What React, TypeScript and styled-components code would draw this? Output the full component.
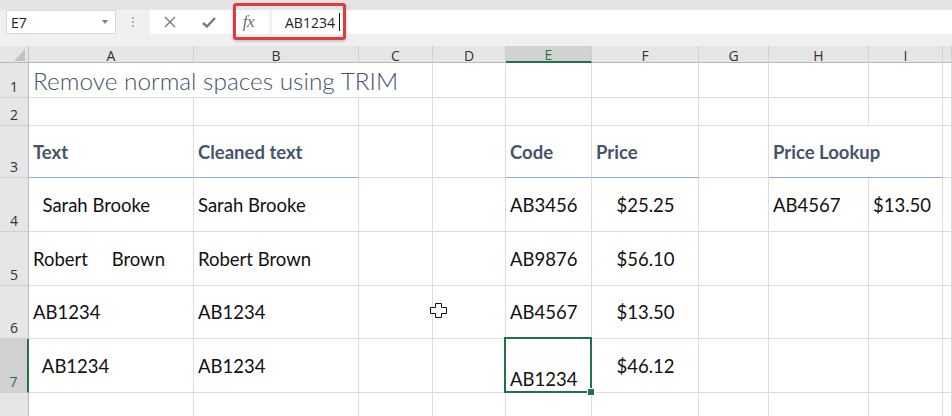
import React from 'react';
import styled, { createGlobalStyle, css } from 'styled-components';

const GlobalStyle = createGlobalStyle`
  * { box-sizing: border-box; }
  html, body { margin: 0; padding: 0; background: #fff; overflow: hidden; }
  body { font-family: Lato, "Liberation Sans", sans-serif; }
`;

const Window = styled.div`
  position: relative;
  width: 952px;
  height: 416px;
  overflow: hidden;
  background: #fff;
`;

const TopStrip = styled.div`
  height: 10px;
  background: #e4e4e4;
`;

const FormulaArea = styled.div`
  display: flex;
  align-items: stretch;
  height: 36px;
  padding-bottom: 12px;
  background: #f0f0f0;
`;

const NameBox = styled.div`
  margin-left: 6px;
  width: 110px;
  background: #fff;
  border: 1px solid #d8d8d8;
  display: flex;
  align-items: center;
  justify-content: space-between;
  padding: 0 7px 0 4px;
  font-family: "Open Sans", sans-serif;
  font-size: 14px;
  color: #222;
`;

const DropArrow = styled.span`
  width: 0;
  height: 0;
  border-left: 3.5px solid transparent;
  border-right: 3.5px solid transparent;
  border-top: 4px solid #7c7c7c;
`;

const Dots = styled.div`
  width: 34px;
  display: flex;
  flex-direction: column;
  align-items: center;
  justify-content: center;
  gap: 2px;
`;

const Dot = styled.span`
  width: 2px;
  height: 2px;
  background: #b3b3b3;
`;

const ButtonsBox = styled.div`
  width: 119px;
  background: #fff;
  display: flex;
  align-items: center;
`;

const ToolButton = styled.div<{ $w: number }>`
  width: ${(p) => p.$w}px;
  height: 100%;
  display: flex;
  align-items: center;
  justify-content: center;
  color: #7a7a7a;
`;

const FxText = styled.span`
  font-family: "Liberation Serif", serif;
  font-style: italic;
  font-size: 17px;
  color: #6e6e6e;
  letter-spacing: -0.5px;
`;

const FormulaInput = styled.div`
  flex: 1;
  margin-left: 3px;
  background: #fff;
  display: flex;
  align-items: center;
  padding-left: 13px;
  font-family: "Open Sans", sans-serif;
  font-size: 14px;
  color: #222;
`;

const Caret = styled.span`
  display: inline-block;
  width: 1px;
  height: 18px;
  background: #111;
  margin-left: 4px;
`;

const Highlight = styled.div`
  position: absolute;
  left: 233px;
  top: 3px;
  width: 113px;
  height: 37px;
  border: 3px solid #e2393f;
  border-radius: 3px;
  box-shadow: 0 1px 3px rgba(0, 0, 0, 0.25);
  pointer-events: none;
`;

const Sheet = styled.div`
  display: grid;
  grid-template-columns: 29px 165px 165px 74px 73px 86px 107px 70px 100px 74px 1fr;
  grid-template-rows: 17px 35px 28px 52px 54px 54px 53px 54px 54px;
`;

const Corner = styled.div`
  background: #e6e6e6;
  border-right: 1px solid #c4c4c4;
  border-bottom: 1px solid #b8b8b8;
  position: relative;
  &::after {
    content: '';
    position: absolute;
    right: 3px;
    bottom: 1px;
    width: 0;
    height: 0;
    border-left: 11px solid transparent;
    border-bottom: 12px solid #c2c2c2;
  }
`;

const ColHeader = styled.div<{ $active?: boolean }>`
  background: #e6e6e6;
  border-right: 1px solid #d0d0d0;
  border-bottom: 1px solid #b8b8b8;
  display: flex;
  align-items: center;
  justify-content: center;
  padding-top: 2px;
  font-family: "Open Sans", sans-serif;
  font-size: 14px;
  color: #333;
  ${(p) =>
    p.$active &&
    css`
      background: #d2d2d2;
      color: #217346;
      border-bottom: 2px solid #217346;
    `}
`;

const RowHeader = styled.div<{ $active?: boolean }>`
  background: #e6e6e6;
  border-right: 1px solid #bcbcbc;
  border-bottom: 1px solid #d0d0d0;
  display: flex;
  align-items: flex-end;
  justify-content: center;
  padding-bottom: 1px;
  font-family: "Open Sans", sans-serif;
  font-size: 14px;
  color: #333;
  ${(p) =>
    p.$active &&
    css`
      background: #d2d2d2;
      color: #217346;
      border-right: 2px solid #217346;
    `}
`;

type Variant = 'title' | 'header' | 'data';

const Cell = styled.div<{
  $variant?: Variant;
  $align?: 'left' | 'center';
  $bottom?: boolean;
  $rule?: boolean;
  $span?: number;
  $selected?: boolean;
}>`
  position: relative;
  border-right: 1px solid #dcdcdc;
  border-bottom: 1px solid ${(p) => (p.$rule ? '#8eaadb' : '#dcdcdc')};
  display: flex;
  align-items: ${(p) => (p.$bottom ? 'flex-end' : 'center')};
  justify-content: ${(p) => (p.$align === 'center' ? 'center' : 'flex-start')};
  padding: 0 3px ${(p) => (p.$bottom ? '2px' : '0')} 4px;
  white-space: pre;
  font-family: Lato, "Liberation Sans", sans-serif;
  font-size: 18.5px;
  color: #111;
  ${(p) => p.$span && css`grid-column: span ${p.$span};`}
  ${(p) =>
    p.$variant === 'title' &&
    css`
      font-size: 24.4px;
      font-weight: 300;
      color: #44546a;
    `}
  ${(p) =>
    p.$variant === 'header' &&
    css`
      font-weight: 700;
      color: #44546a;
    `}
  ${(p) =>
    p.$selected &&
    css`
      &::after {
        content: '';
        position: absolute;
        left: -2px;
        top: -2px;
        right: -1px;
        bottom: -1px;
        border: 2px solid #217346;
        pointer-events: none;
      }
      &::before {
        content: '';
        position: absolute;
        right: -4px;
        bottom: -4px;
        width: 6px;
        height: 6px;
        background: #217346;
        border: 1px solid #fff;
        z-index: 2;
      }
    `}
`;

const Pointer = styled.svg`
  position: absolute;
  left: 430px;
  top: 303px;
  pointer-events: none;
`;

type CellDef = {
  text?: string;
  variant?: Variant;
  align?: 'left' | 'center';
  bottom?: boolean;
  rule?: boolean;
  span?: number;
  selected?: boolean;
};

const COLS = ['A', 'B', 'C', 'D', 'E', 'F', 'G', 'H', 'I', ''];

const e = (): CellDef => ({});
const blanks = (n: number): CellDef[] => Array.from({ length: n }, e);

const ROWS: CellDef[][] = [
  [{ text: 'Remove normal spaces using TRIM', variant: 'title', span: 3 }, ...blanks(7)],
  blanks(10),
  [
    { text: 'Text', variant: 'header', rule: true },
    { text: 'Cleaned text', variant: 'header', rule: true },
    e(),
    e(),
    { text: 'Code', variant: 'header', rule: true },
    { text: 'Price', variant: 'header', rule: true },
    e(),
    { text: 'Price Lookup', variant: 'header', rule: true, span: 2 },
    e(),
  ],
  [
    { text: '  Sarah Brooke' },
    { text: 'Sarah Brooke' },
    e(),
    e(),
    { text: 'AB3456' },
    { text: '$25.25', align: 'center' },
    e(),
    { text: 'AB4567' },
    { text: '$13.50' },
    e(),
  ],
  [
    { text: 'Robert     Brown' },
    { text: 'Robert Brown' },
    e(),
    e(),
    { text: 'AB9876' },
    { text: '$56.10', align: 'center' },
    ...blanks(4),
  ],
  [
    { text: 'AB1234' },
    { text: 'AB1234' },
    e(),
    e(),
    { text: 'AB4567' },
    { text: '$13.50', align: 'center' },
    ...blanks(4),
  ],
  [
    { text: '  AB1234' },
    { text: 'AB1234' },
    e(),
    e(),
    { text: 'AB1234', bottom: true, selected: true },
    { text: '$46.12', align: 'center' },
    ...blanks(4),
  ],
  blanks(10),
];

// The last row's number sits below the visible window edge, as in the reference.
const VISIBLE_ROW_NUMBERS = 7;

export default function App() {
  return (
    <Window>
      <GlobalStyle />
      <TopStrip />
      <FormulaArea>
        <NameBox>
          <span>E7</span>
          <DropArrow />
        </NameBox>
        <Dots>
          <Dot />
          <Dot />
          <Dot />
        </Dots>
        <ButtonsBox>
          <ToolButton $w={40}>
            <svg width="12" height="12" viewBox="0 0 12 12">
              <path d="M1 1 L11 11 M11 1 L1 11" stroke="#7a7a7a" strokeWidth="1.4" fill="none" />
            </svg>
          </ToolButton>
          <ToolButton $w={38}>
            <svg width="14" height="11" viewBox="0 0 14 11">
              <path d="M1 6 L5 9.5 L13 1" stroke="#7a7a7a" strokeWidth="2.4" fill="none" />
            </svg>
          </ToolButton>
          <ToolButton $w={41}>
            <FxText>fx</FxText>
          </ToolButton>
        </ButtonsBox>
        <FormulaInput>
          AB1234
          <Caret />
        </FormulaInput>
      </FormulaArea>
      <Sheet>
        <Corner />
        {COLS.map((c) => (
          <ColHeader key={'h' + c} $active={c === 'E'}>
            {c}
          </ColHeader>
        ))}
        {ROWS.map((row, ri) => (
          <React.Fragment key={ri}>
            <RowHeader $active={ri === 6}>{ri < VISIBLE_ROW_NUMBERS ? ri + 1 : ''}</RowHeader>
            {row.map((cell, ci) => (
              <Cell
                key={ci}
                $variant={cell.variant}
                $align={cell.align}
                $bottom={cell.bottom}
                $rule={cell.rule}
                $span={cell.span}
                $selected={cell.selected}
              >
                {cell.text}
              </Cell>
            ))}
          </React.Fragment>
        ))}
      </Sheet>
      <Highlight />
      <Pointer width="17" height="15" viewBox="0 0 17 15">
        <path
          d="M5.5 0.5 H11.5 V4.5 H16.5 V10.5 H11.5 V14.5 H5.5 V10.5 H0.5 V4.5 H5.5 Z"
          fill="#fff"
          stroke="#111"
          strokeWidth="1"
        />
      </Pointer>
    </Window>
  );
}
